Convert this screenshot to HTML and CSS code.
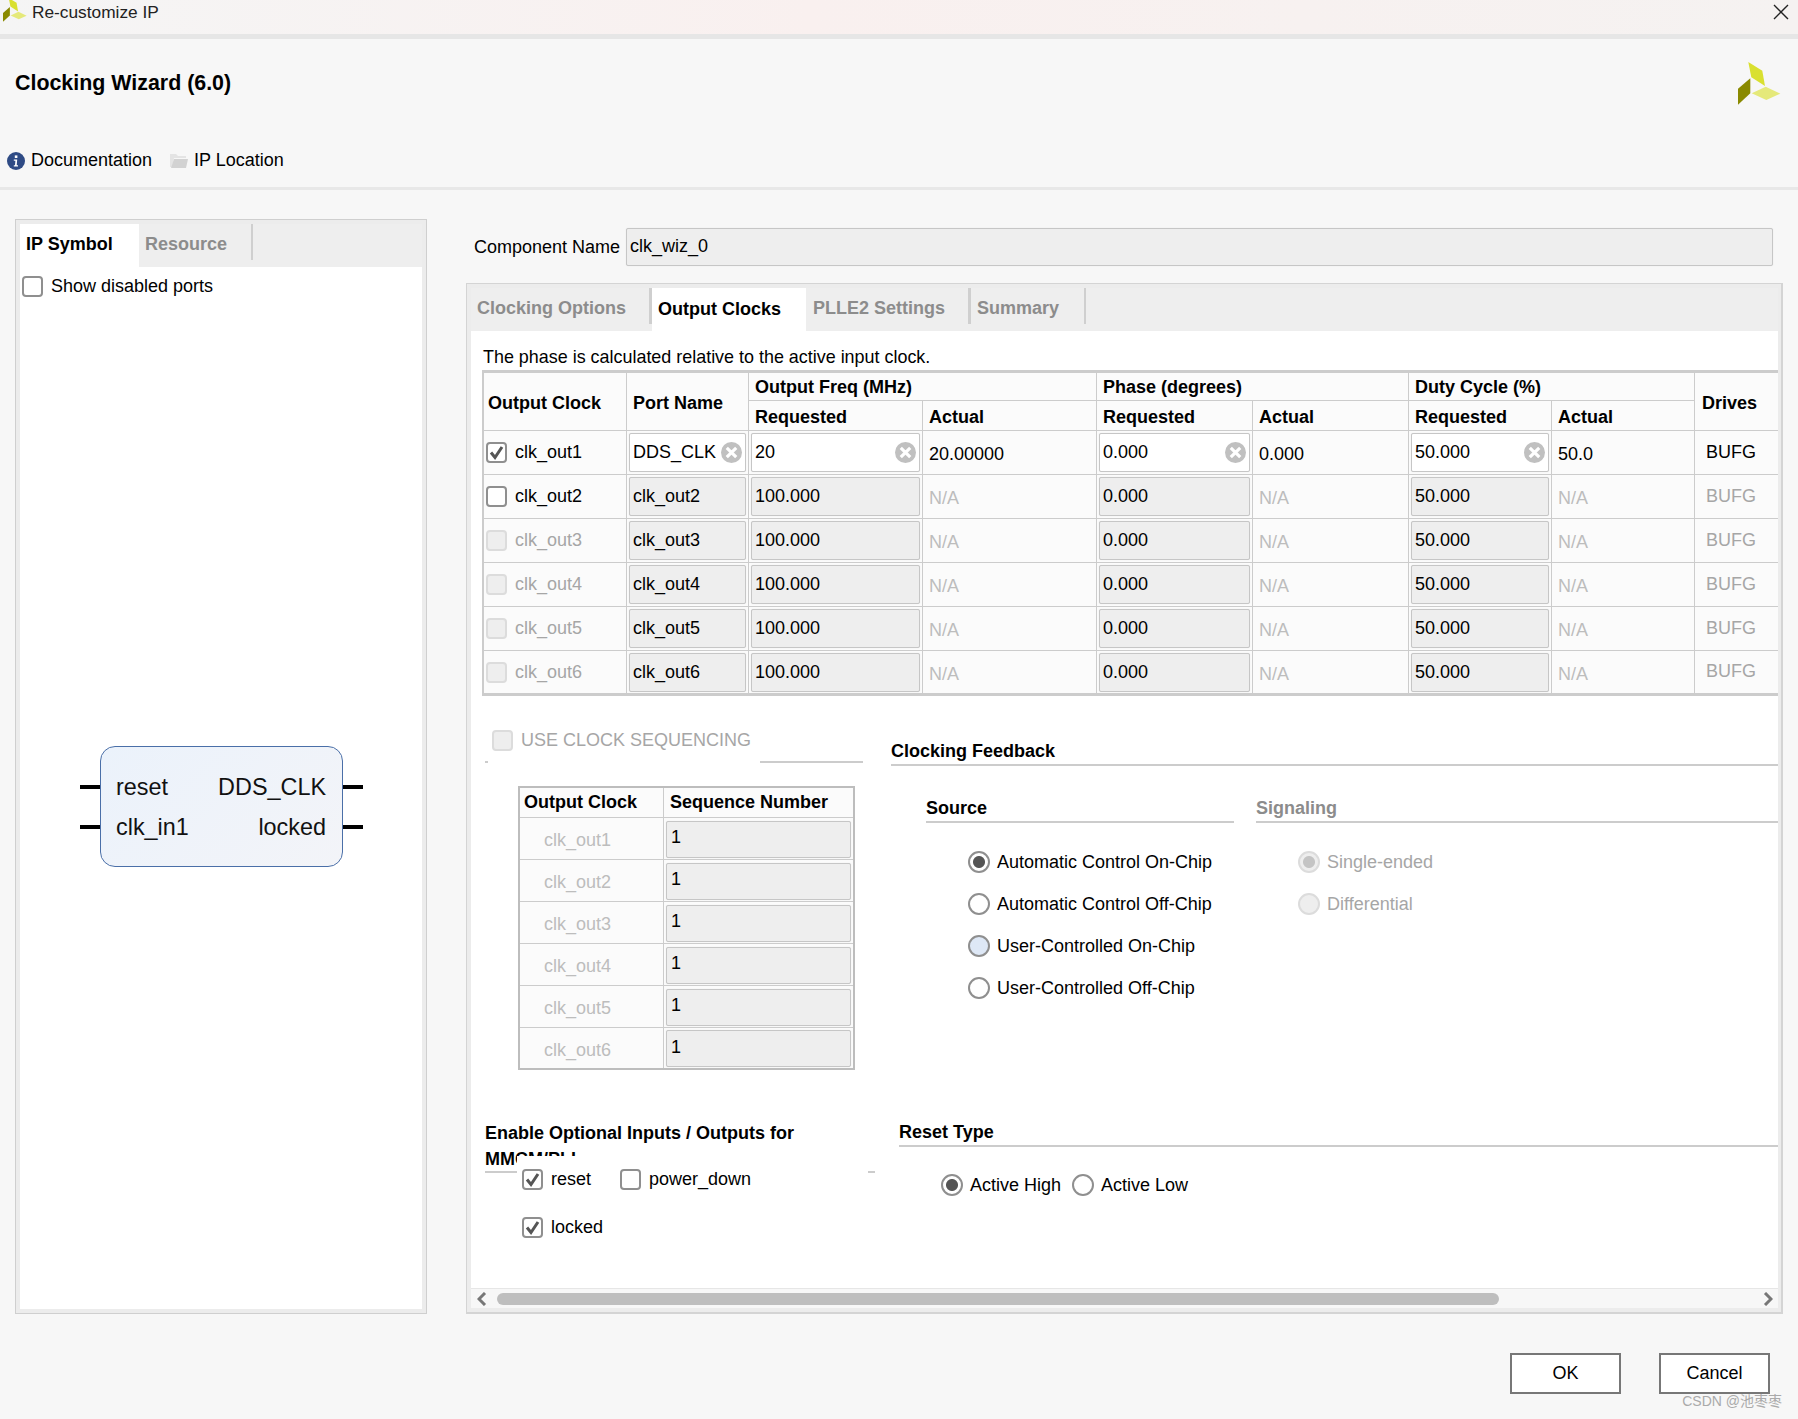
FILE: index.html
```html
<!DOCTYPE html>
<html lang="en">
<head>
<meta charset="utf-8">
<title>Re-customize IP</title>
<link rel="stylesheet" href="styles.css">
</head>
<body>
<svg class="defs" width="0" height="0" aria-hidden="true">
  <symbol id="logo" viewBox="0 0 43 43">
    <polygon points="10.3,0 24.3,8.7 27,24 13.3,15.3" fill="#d9e030"/>
    <polygon points="0,26.7 12.3,16.3 12.3,31.3 0,42.7" fill="#8a8a00"/>
    <polygon points="13.7,31.3 27.7,24.7 42.3,31.7 28.3,38" fill="#e5e97a"/>
  </symbol>
  <symbol id="clear" viewBox="0 0 20 20">
    <circle cx="10" cy="10" r="10" fill="#c0c0c0"/>
    <path d="M5.5 5.5l9 9M14.5 5.5l-9 9" stroke="#fff" stroke-width="3" fill="none"/>
  </symbol>
  <symbol id="tick" viewBox="0 0 21 21">
    <path d="M5 10.5l4 5 7-10.5" stroke="#555" stroke-width="3" fill="none"/>
  </symbol>
</svg>

<header class="titlebar">
  <svg class="title-logo"><use href="#logo"/></svg>
  <span class="title-text">Re-customize IP</span>
  <svg class="close" viewBox="0 0 16 16"><path d="M1 1l14 14M15 1L1 15" stroke="#222" stroke-width="1.4" fill="none"/></svg>
</header>

<section class="header">
  <div class="header-top">
    <h1 class="app-title">Clocking Wizard (6.0)</h1>
    <svg class="app-logo"><use href="#logo"/></svg>
  </div>
  <div class="links">
    <span class="link">
      <svg class="info" viewBox="0 0 18 18"><circle cx="9" cy="9" r="9" fill="#2f4b85"/><rect x="7.8" y="3.4" width="2.6" height="2.6" fill="#fff"/><path d="M6.8 7.6h3.4l-.5 5.6h1.3v1.2H6.8v-1.2h1.2l.4-4.4H6.8z" fill="#fff"/></svg>
      Documentation
    </span>
    <span class="link">
      <svg class="folder" viewBox="0 0 18 15"><path d="M0 1h6l2 2h8v2H4L2 14H0z" fill="#e4e4e4"/><path d="M4 6h14l-2 9H1z" fill="#d2d2d2"/></svg>
      IP Location
    </span>
  </div>
</section>

<main class="main">
  <aside class="left-panel">
    <nav class="tabs left-tabs">
      <span class="tab active sym-tab">IP Symbol</span>
      <span class="tab res-tab">Resource</span>
    </nav>
    <div class="left-body">
      <label class="check show-ports"><span class="box"></span>Show disabled ports</label>
      <div class="symbol-wrap">
        <div class="pins"><i></i><i></i></div>
        <div class="symbol">
          <div class="sym-row"><span>reset</span><span>DDS_CLK</span></div>
          <div class="sym-row"><span>clk_in1</span><span>locked</span></div>
        </div>
        <div class="pins"><i></i><i></i></div>
      </div>
    </div>
  </aside>

  <div class="right-col">
    <div class="component">
      <span class="comp-label">Component Name</span>
      <div class="field disabled comp-field">clk_wiz_0</div>
    </div>
    <section class="right-panel">
      <nav class="tabs right-tabs">
        <span class="tab t1">Clocking Options</span>
        <span class="tab active t2">Output Clocks</span>
        <span class="tab t3">PLLE2 Settings</span>
        <span class="tab t4">Summary</span>
      </nav>
      <div class="content">
        <p class="note">The phase is calculated relative to the active input clock.</p>
        <table class="clocks">
          <colgroup>
            <col class="c1"><col class="c2"><col class="c3"><col class="c3"><col class="c4"><col class="c5"><col class="c6"><col class="c6"><col class="c7">
          </colgroup>
          <thead>
            <tr class="h1">
              <th rowspan="2" class="first-h">Output Clock</th>
              <th rowspan="2">Port Name</th>
              <th colspan="2">Output Freq (MHz)</th>
              <th colspan="2">Phase (degrees)</th>
              <th colspan="2">Duty Cycle (%)</th>
              <th rowspan="2" class="last drives-h">Drives</th>
            </tr>
            <tr class="h2">
              <th>Requested</th><th>Actual</th>
              <th>Requested</th><th>Actual</th>
              <th>Requested</th><th>Actual</th>
            </tr>
          </thead>
          <tbody>
            <tr>
              <td><label class="check row-check"><span class="box"><svg viewBox="0 0 21 21"><use href="#tick"/></svg></span>clk_out1</label></td>
              <td><div class="field">DDS_CLK<svg class="clr"><use href="#clear"/></svg></div></td>
              <td><div class="field">20<svg class="clr"><use href="#clear"/></svg></div></td>
              <td class="val">20.00000</td>
              <td><div class="field">0.000<svg class="clr"><use href="#clear"/></svg></div></td>
              <td class="val">0.000</td>
              <td><div class="field">50.000<svg class="clr"><use href="#clear"/></svg></div></td>
              <td class="val">50.0</td>
              <td class="last buf">BUFG</td>
            </tr>
            <tr>
              <td><label class="check row-check"><span class="box"></span>clk_out2</label></td>
              <td><div class="field disabled">clk_out2</div></td>
              <td><div class="field disabled">100.000</div></td>
              <td class="val na">N/A</td>
              <td><div class="field disabled">0.000</div></td>
              <td class="val na">N/A</td>
              <td><div class="field disabled">50.000</div></td>
              <td class="val na">N/A</td>
              <td class="last buf off">BUFG</td>
            </tr>
            <tr>
              <td><label class="check row-check off"><span class="box"></span>clk_out3</label></td>
              <td><div class="field disabled">clk_out3</div></td>
              <td><div class="field disabled">100.000</div></td>
              <td class="val na">N/A</td>
              <td><div class="field disabled">0.000</div></td>
              <td class="val na">N/A</td>
              <td><div class="field disabled">50.000</div></td>
              <td class="val na">N/A</td>
              <td class="last buf off">BUFG</td>
            </tr>
            <tr>
              <td><label class="check row-check off"><span class="box"></span>clk_out4</label></td>
              <td><div class="field disabled">clk_out4</div></td>
              <td><div class="field disabled">100.000</div></td>
              <td class="val na">N/A</td>
              <td><div class="field disabled">0.000</div></td>
              <td class="val na">N/A</td>
              <td><div class="field disabled">50.000</div></td>
              <td class="val na">N/A</td>
              <td class="last buf off">BUFG</td>
            </tr>
            <tr>
              <td><label class="check row-check off"><span class="box"></span>clk_out5</label></td>
              <td><div class="field disabled">clk_out5</div></td>
              <td><div class="field disabled">100.000</div></td>
              <td class="val na">N/A</td>
              <td><div class="field disabled">0.000</div></td>
              <td class="val na">N/A</td>
              <td><div class="field disabled">50.000</div></td>
              <td class="val na">N/A</td>
              <td class="last buf off">BUFG</td>
            </tr>
            <tr>
              <td><label class="check row-check off"><span class="box"></span>clk_out6</label></td>
              <td><div class="field disabled">clk_out6</div></td>
              <td><div class="field disabled">100.000</div></td>
              <td class="val na">N/A</td>
              <td><div class="field disabled">0.000</div></td>
              <td class="val na">N/A</td>
              <td><div class="field disabled">50.000</div></td>
              <td class="val na">N/A</td>
              <td class="last buf off">BUFG</td>
            </tr>
          </tbody>
        </table>

        <div class="row-a">
          <div class="seq-col">
            <div class="seq-legend">
              <label class="check seq-label off"><span class="box"></span>USE CLOCK SEQUENCING</label>
            </div>
            <table class="seq">
              <thead><tr><th>Output Clock</th><th>Sequence Number</th></tr></thead>
              <tbody>
                <tr><td class="seq-name">clk_out1</td><td><div class="field disabled">1</div></td></tr>
                <tr><td class="seq-name">clk_out2</td><td><div class="field disabled">1</div></td></tr>
                <tr><td class="seq-name">clk_out3</td><td><div class="field disabled">1</div></td></tr>
                <tr><td class="seq-name">clk_out4</td><td><div class="field disabled">1</div></td></tr>
                <tr><td class="seq-name">clk_out5</td><td><div class="field disabled">1</div></td></tr>
                <tr><td class="seq-name">clk_out6</td><td><div class="field disabled">1</div></td></tr>
              </tbody>
            </table>
          </div>
          <div class="feedback">
            <h2 class="sec-title">Clocking Feedback</h2>
            <div class="fb-grid">
              <div>
                <h3 class="sec-title">Source</h3>
                <div class="radios">
                  <label class="radio"><span class="dot on"></span>Automatic Control On-Chip</label>
                  <label class="radio"><span class="dot"></span>Automatic Control Off-Chip</label>
                  <label class="radio"><span class="dot hover"></span>User-Controlled On-Chip</label>
                  <label class="radio"><span class="dot"></span>User-Controlled Off-Chip</label>
                </div>
              </div>
              <div>
                <h3 class="sec-title dim">Signaling</h3>
                <div class="radios sig">
                  <label class="radio off"><span class="dot on"></span>Single-ended</label>
                  <label class="radio off"><span class="dot"></span>Differential</label>
                </div>
              </div>
            </div>
          </div>
        </div>

        <div class="row-b">
          <div class="optional">
            <h2 class="opt-title">Enable Optional Inputs / Outputs for MMCM/PLL</h2>
            <div class="opt-body">
              <label class="check"><span class="box"><svg viewBox="0 0 21 21"><use href="#tick"/></svg></span>reset</label>
              <label class="check"><span class="box"></span>power_down</label>
              <label class="check"><span class="box"><svg viewBox="0 0 21 21"><use href="#tick"/></svg></span>locked</label>
            </div>
          </div>
          <div class="reset-type">
            <h2 class="sec-title">Reset Type</h2>
            <div class="reset-radios">
              <label class="radio"><span class="dot on"></span>Active High</label>
              <label class="radio"><span class="dot"></span>Active Low</label>
            </div>
          </div>
        </div>
      </div>
      <div class="scrollbar">
        <svg class="arrow" viewBox="0 0 10 14"><path d="M8 1L2 7l6 6" stroke="#777" stroke-width="3" fill="none"/></svg>
        <div class="thumb"></div>
        <svg class="arrow" viewBox="0 0 10 14"><path d="M2 1l6 6-6 6" stroke="#777" stroke-width="3" fill="none"/></svg>
      </div>
    </section>
  </div>
</main>

<footer class="footer">
  <button class="btn">OK</button>
  <button class="btn">Cancel</button>
  <span class="watermark">CSDN @池枣枣</span>
</footer>
</body>
</html>
```
FILE: styles.css
```css
* { box-sizing: border-box; }
html, body { margin: 0; padding: 0; }
body {
  width: 1798px;
  height: 1419px;
  overflow: hidden;
  background: #f7f7f7;
  color: #000;
  font: 18px/21px "Liberation Sans", Arial, sans-serif;
}
h1, h2, h3, p { margin: 0; }
.defs { position: absolute; }

.titlebar {
  height: 39px;
  display: flex;
  align-items: flex-start;
  border-bottom: 5px solid #e6e6e6;
  background: linear-gradient(90deg, #f5f5f5 0%, #f9f0ef 45%, #f5f2f1 100%);
  overflow: hidden;
}
.title-logo { width: 24px; height: 24px; margin: -2px 0 0 3px; flex: none; }
.title-text { margin: 2px 0 0 5px; font-size: 17.3px; color: #222; }
.close { width: 16px; height: 16px; margin: 4px 9px 0 auto; }

.header {
  height: 151px;
  border-bottom: 3px solid #e8e8e8;
}
.header-top {
  display: flex;
  justify-content: space-between;
  padding: 23px 17px 0 15px;
  height: 111px;
}
.app-title { font-size: 21.4px; line-height: 42px; font-weight: 700; }
.app-logo { width: 43px; height: 43px; }
.links { display: flex; gap: 18px; padding-left: 7px; }
.link { display: flex; align-items: center; gap: 6px; height: 21px; }
.info { width: 18px; height: 18px; }
.folder { width: 18px; height: 15px; }

.main {
  display: flex;
  padding: 29px 15px 0 15px;
  gap: 39px;
  height: 1124px;
}
.left-panel {
  width: 412px;
  height: 1095px;
  border: 1px solid #cfcfcf;
  padding: 4px;
  background: #ececec;
  display: flex;
  flex-direction: column;
}
.tabs {
  display: flex;
  flex: none;
  height: 43px;
  background: #eeeeee;
  font-weight: 700;
  color: #8c8c8c;
}
.tab { display: flex; align-items: center; height: 43px; padding-bottom: 1px; }
.tab.active { background: #fff; color: #000; }
.sym-tab { width: 119px; padding-left: 6px; padding-bottom: 3px; }
.res-tab { width: 114px; padding-left: 6px; height: 36px; margin-bottom: 7px; padding-top: 6px; border-right: 2px solid #cfcfcf; }
.left-body { flex: 1; background: #fff; display: flex; flex-direction: column; }

.check { display: flex; align-items: center; gap: 8px; white-space: nowrap; }
.box {
  display: block;
  flex: none;
  width: 21px;
  height: 21px;
  border: 2px solid #8f8f8f;
  border-radius: 4px;
  background: #fff;
}
.box svg { display: block; width: 21px; height: 21px; margin: -2px; }
.check.off { color: #a6a6a6; }
.check.off .box { border-color: #dcdcdc; background: #eeeeee; }
.show-ports { margin: 9px 0 0 2px; }

.symbol-wrap {
  display: flex;
  align-items: center;
  margin: 449px 0 0 60px;
  width: 283px;
}
.pins { width: 20px; flex: none; display: flex; flex-direction: column; gap: 36px; }
.pins i { display: block; height: 4px; background: #000; }
.symbol {
  width: 243px;
  flex: none;
  height: 121px;
  padding: 20px 16px 0 15px;
  border: 1.5px solid #4a6fa8;
  border-radius: 15px;
  background: linear-gradient(135deg, #ebf2fb, #f3f4f8);
  font-size: 23.4px;
  line-height: 40px;
  color: #111;
}
.sym-row { display: flex; justify-content: space-between; }

.right-col { width: 1317px; display: flex; flex-direction: column; }
.component { display: flex; align-items: center; height: 38px; margin: 9px 0 17px 8px; }
.comp-label { width: 152px; flex: none; }
.field {
  display: flex;
  align-items: center;
  height: 39px;
  margin: 2px;
  padding: 0 0 1px 3px;
  border: 1px solid #c6c6c6;
  border-radius: 2px;
  background: #fff;
  box-shadow: 0 0 1px #ddd;
  white-space: nowrap;
}
.field.disabled { background: #eeeeee; }
.comp-field { width: 1147px; height: 38px; margin: 0; }
.clr { width: 21px; height: 21px; margin-left: auto; margin-right: 3px; flex: none; }

.right-panel {
  flex: none;
  height: 1031px;
  border: 1px solid #d4d4d4;
  border-width: 1px 2px 2px 1px;
  padding: 4px 3px 4px 4px;
  background: #ececec;
  display: flex;
  flex-direction: column;
}
.right-tabs { background: #eeeeee; }
.right-tabs .tab { height: 43px; }
.t1 { width: 181px; padding-left: 6px; border-right: 3px solid #cfcfcf; height: 36px !important; padding-top: 6px; }
.t2 { width: 154px; padding-left: 6px; }
.t3 { width: 165px; padding-left: 7px; border-right: 3px solid #cfcfcf; height: 36px !important; padding-top: 6px; }
.t4 { width: 115px; padding-left: 6px; border-right: 2px solid #cfcfcf; height: 36px !important; padding-top: 6px; }

.content { flex: 1; background: #fff; position: relative; overflow: hidden; }
.note { padding: 16px 0 1px 12px; height: 39px; font-size: 17.93px; }

.clocks {
  table-layout: fixed;
  border-collapse: separate;
  border-spacing: 0;
  width: 1296px;
  margin-left: 11px;
  background: #fbfbfb;
  border-top: 3px solid #cccccc;
  border-bottom: 3px solid #cccccc;
  border-left: 2px solid #cccccc;
}
.c1 { width: 143px; }
.c2 { width: 122px; }
.c3 { width: 174px; }
.c4 { width: 156px; }
.c5 { width: 156px; }
.c6 { width: 143px; }
.c7 { width: 84px; }
.clocks th, .clocks td {
  padding: 0;
  border-right: 1px solid #cccccc;
  border-bottom: 1px solid #cccccc;
  font-weight: 400;
  text-align: left;
  vertical-align: middle;
}
.clocks th { font-weight: 700; padding-left: 6px; }
.clocks .first-h { padding-left: 4px; }
.clocks .last { border-right: 0; }
.h1 th { height: 28px; padding-top: 2px; }
.h1 th[rowspan] { padding-top: 4px; }
.h2 th { height: 30px; padding-top: 4px; }
.clocks tbody td { height: 44px; }
.clocks tbody tr:last-child td { border-bottom: 0; height: 42px; }
.clocks tbody tr:last-child .field { margin-bottom: 1px; }
.clocks .val { padding: 4px 0 0 6px; }
.clocks .na { color: #bdbdbd; }
.clocks .buf { padding-left: 11px; padding-bottom: 1px; }
.clocks .buf.off { color: #a6a6a6; }
.clocks .drives-h { padding-left: 7px; }
.row-check { padding-left: 2px; }

.row-a { display: flex; margin: 30px 0 0 14px; height: 346px; }
.seq-col { width: 378px; flex: none; margin-right: 28px; }
.seq-legend { height: 37px; border-bottom: 2px solid #cccccc; display: flex; }
.seq-label {
  margin-left: 3px;
  padding-left: 4px;
  width: 272px;
  height: 37px;
  padding-bottom: 9px;
  background: #fff;
  color: #a6a6a6;
}
.seq {
  table-layout: fixed;
  border-collapse: separate;
  border-spacing: 0;
  width: 337px;
  margin: 23px 0 0 33px;
  background: #fbfbfb;
  border: 2px solid #bdbdbd;
}
.seq th, .seq td {
  padding: 0;
  border-bottom: 1px solid #cccccc;
  text-align: left;
  font-weight: 400;
}
.seq th { height: 30px; font-weight: 700; padding-left: 6px; }
.seq th:first-child { padding-left: 4px; }
.seq th:first-child, .seq td:first-child { width: 144px; border-right: 1px solid #cccccc; }
.seq td { height: 42px; }
.seq tr:last-child td { border-bottom: 0; height: 40px; }
.seq-name { color: #bdbdbd; padding: 4px 0 0 24px !important; }
.seq .field { height: 37px; margin: 2px 2px 1px 2px; padding-left: 4px; padding-bottom: 3px; }

.sec-title {
  font-size: 18px;
  font-weight: 700;
  line-height: 21px;
  border-bottom: 2px solid #cccccc;
  padding-bottom: 2px;
}
.feedback { flex: 1; padding-top: 15px; }
.fb-grid { display: grid; grid-template-columns: 308px 1fr; gap: 22px; margin: 32px 0 0 35px; }
.dim { color: #8c8c8c; }
.radios { display: flex; flex-direction: column; gap: 20px; padding: 28px 0 0 42px; }
.sig { padding-left: 42px; }
.radio { display: flex; align-items: center; gap: 7px; height: 22px; white-space: nowrap; }
.dot {
  flex: none;
  display: block;
  width: 22px;
  height: 22px;
  border: 2px solid #8f8f8f;
  border-radius: 50%;
  background: #fff;
}
.dot.on { background: radial-gradient(circle, #555 0, #555 5.5px, #fff 6.5px); }
.dot.hover { background: #dee8f6; }
.radio.off { color: #a6a6a6; gap: 7px; }
.radio.off .dot { border-color: #dcdcdc; background: #eeeeee; }
.radio.off .dot.on { background: radial-gradient(circle, #c4c4c4 0, #c4c4c4 5.5px, #eeeeee 6.5px); }

.row-b { display: flex; margin: 50px 0 0 14px; }
.optional { width: 414px; flex: none; position: relative; }
.opt-title {
  width: 390px;
  height: 53px;
  margin-top: -2px;
  font-size: 18px;
  line-height: 26px;
  font-weight: 700;
  border-bottom: 2px solid #cccccc;
}
.opt-body {
  position: absolute;
  left: 32px;
  top: 34px;
  width: 351px;
  height: 94px;
  padding: 13px 0 0 5px;
  background: #fff;
  display: grid;
  grid-template-columns: 98px 1fr;
  grid-auto-rows: 21px;
  row-gap: 27px;
  justify-items: start;
}
.opt-body .check { gap: 8px; height: 21px; }
.reset-type { flex: 1; }
.reset-radios { display: flex; gap: 11px; padding: 27px 0 0 42px; }

.scrollbar {
  flex: none;
  height: 20px;
  background: #f7f7f7;
  border-top: 1px solid #e6e6e6;
  display: flex;
  align-items: center;
  padding: 0 5px 0 6px;
}
.arrow { width: 10px; height: 14px; flex: none; }
.thumb { width: 1002px; height: 12px; margin: 0 264px 0 10px; border-radius: 6px; background: #bebebe; }

.footer {
  position: relative;
  display: flex;
  justify-content: flex-end;
  gap: 38px;
  padding: 39px 28px 0 0;
  height: 105px;
}
.btn {
  width: 111px;
  height: 41px;
  border: 2px solid #777777;
  background: #fff;
  color: #000;
  font: inherit;
  padding: 0;
}
.watermark {
  position: absolute;
  right: 16px;
  top: 77px;
  font: 14px/20px "Liberation Sans", "Noto Sans CJK SC", sans-serif;
  color: #aaaaaa;
}
```
